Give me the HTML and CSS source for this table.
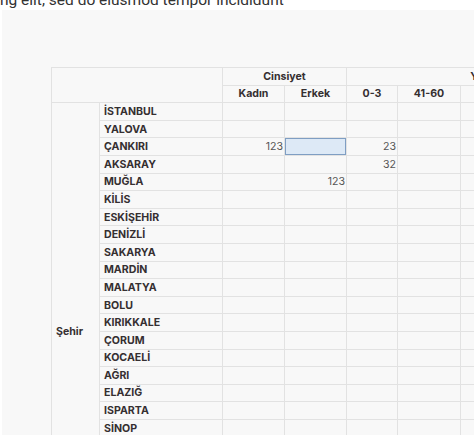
FILE: index.html
```html
<!DOCTYPE html>
<html lang="tr">
<head>
<meta charset="utf-8">
<title>Pivot</title>
<link rel="stylesheet" href="styles.css">
</head>
<body>
<div class="page">
  <p class="intro">ng elit, sed do eiusmod tempor incididunt</p>
  <div class="panel">
    <table class="grid">
      <colgroup>
        <col class="c-group"><col class="c-city"><col class="c-sex"><col class="c-sex"><col class="c-age1"><col class="c-age2"><col class="c-age3"><col class="c-age3">
      </colgroup>
      <thead>
        <tr><th class="corner" colspan="2" rowspan="2"></th><th colspan="2">Cinsiyet</th><th colspan="4">Yaş</th></tr>
        <tr><th>Kadın</th><th>Erkek</th><th>0-3</th><th>41-60</th><th>61-80</th><th>81+</th></tr>
      </thead>
      <tbody>
        <tr><th class="group" rowspan="26">Şehir</th><th class="city">İSTANBUL</th><td></td><td></td><td></td><td></td><td></td><td></td></tr>
        <tr><th class="city">YALOVA</th><td></td><td></td><td></td><td></td><td></td><td></td></tr>
        <tr><th class="city">ÇANKIRI</th><td class="num">123</td><td class="selected"></td><td class="num">23</td><td></td><td></td><td></td></tr>
        <tr><th class="city">AKSARAY</th><td></td><td></td><td class="num">32</td><td></td><td></td><td></td></tr>
        <tr><th class="city">MUĞLA</th><td></td><td class="num">123</td><td></td><td></td><td></td><td></td></tr>
        <tr><th class="city">KİLİS</th><td></td><td></td><td></td><td></td><td></td><td></td></tr>
        <tr><th class="city">ESKİŞEHİR</th><td></td><td></td><td></td><td></td><td></td><td></td></tr>
        <tr><th class="city">DENİZLİ</th><td></td><td></td><td></td><td></td><td></td><td></td></tr>
        <tr><th class="city">SAKARYA</th><td></td><td></td><td></td><td></td><td></td><td></td></tr>
        <tr><th class="city">MARDİN</th><td></td><td></td><td></td><td></td><td></td><td></td></tr>
        <tr><th class="city">MALATYA</th><td></td><td></td><td></td><td></td><td></td><td></td></tr>
        <tr><th class="city">BOLU</th><td></td><td></td><td></td><td></td><td></td><td></td></tr>
        <tr><th class="city">KIRIKKALE</th><td></td><td></td><td></td><td></td><td></td><td></td></tr>
        <tr><th class="city">ÇORUM</th><td></td><td></td><td></td><td></td><td></td><td></td></tr>
        <tr><th class="city">KOCAELİ</th><td></td><td></td><td></td><td></td><td></td><td></td></tr>
        <tr><th class="city">AĞRI</th><td></td><td></td><td></td><td></td><td></td><td></td></tr>
        <tr><th class="city">ELAZIĞ</th><td></td><td></td><td></td><td></td><td></td><td></td></tr>
        <tr><th class="city">ISPARTA</th><td></td><td></td><td></td><td></td><td></td><td></td></tr>
        <tr><th class="city">SİNOP</th><td></td><td></td><td></td><td></td><td></td><td></td></tr>
        <tr><th class="city">ANKARA</th><td></td><td></td><td></td><td></td><td></td><td></td></tr>
        <tr><th class="city">İZMİR</th><td></td><td></td><td></td><td></td><td></td><td></td></tr>
        <tr><th class="city">BURSA</th><td></td><td></td><td></td><td></td><td></td><td></td></tr>
        <tr><th class="city">ANTALYA</th><td></td><td></td><td></td><td></td><td></td><td></td></tr>
        <tr><th class="city">KONYA</th><td></td><td></td><td></td><td></td><td></td><td></td></tr>
        <tr><th class="city">ADANA</th><td></td><td></td><td></td><td></td><td></td><td></td></tr>
        <tr><th class="city">TRABZON</th><td></td><td></td><td></td><td></td><td></td><td></td></tr>
      </tbody>
    </table>
  </div>
</div>
</body>
</html>
```
FILE: styles.css
```css
html, body {
  margin: 0;
  padding: 0;
  background: #ffffff;
}
.page {
  width: 474px;
  height: 435px;
  overflow: hidden;
}
.intro {
  margin: -9px 0 0 0;
  font-family: Roboto, "Liberation Sans", sans-serif;
  font-size: 15.5px;
  line-height: 19px;
  color: #333333;
  white-space: nowrap;
}
.panel {
  margin-left: 2px;
  background: #f8f8f8;
  padding: 57px 0 0 49px;
  height: 600px;
}
.grid {
  border-collapse: separate;
  border-spacing: 0;
  table-layout: fixed;
  width: 561px;
  font-family: Inter, "Liberation Sans", sans-serif;
  font-size: 10.6px;
  color: #352f31;
  border-top: 1px solid #e2e2e2;
  border-left: 1px solid #e2e2e2;
}
.c-group { width: 48px; }
.c-city { width: 123px; }
.c-sex { width: 62px; }
.c-age1 { width: 51px; }
.c-age2 { width: 63px; }
.c-age3 { width: 76px; }
.grid th, .grid td {
  box-sizing: border-box;
  height: 17.6px;
  padding: 1px 4px 0 4px;
  border-right: 1px solid #e2e2e2;
  border-bottom: 1px solid #e2e2e2;
  white-space: nowrap;
  overflow: hidden;
  line-height: 14px;
}
.grid thead th {
  font-weight: 700;
  text-align: center;
}
.grid th.group {
  text-align: left;
  font-weight: 700;
  vertical-align: middle;
}
.grid th.city {
  text-align: left;
  font-weight: 700;
  padding-left: 4px;
}
.grid td.num {
  text-align: right;
  padding-right: 1px;
  color: #555555;
  font-weight: 400;
}
.grid td.selected {
  background: #dde9f6;
  box-shadow: inset 0 0 0 1px #7f9ec3;
}
```
